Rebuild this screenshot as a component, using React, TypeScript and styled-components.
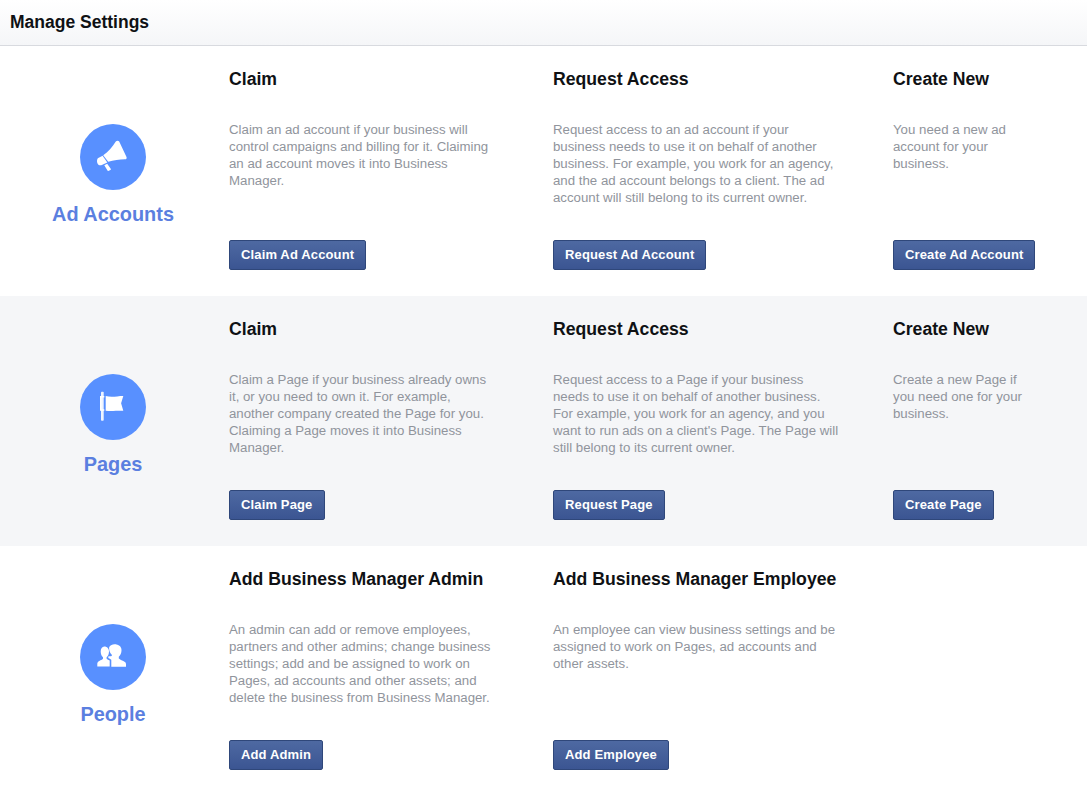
import React from "react";
import styled, { createGlobalStyle } from "styled-components";

const Global = createGlobalStyle`
  html, body { margin: 0; padding: 0; background: #fff; overflow: hidden; }
  body { font-family: "Liberation Sans", Arial, sans-serif; -webkit-font-smoothing: antialiased; }
`;
const Page = styled.div`width: 1087px; height: 785px; overflow: hidden;`;
const Header = styled.header`
  height: 45px; box-sizing: content-box; border-bottom: 1px solid #d8dadf;
  background: linear-gradient(#ffffff, #f5f6f8);
  display: flex; align-items: center; padding-left: 10px;
`;
const HeaderTitle = styled.h1`margin: 0; font-size: 17.5px; font-weight: 700; color: #0f1114;`;
const Section = styled.section<{ $shaded?: boolean }>`
  height: 250px; display: grid; grid-template-columns: 229px 324px 340px 194px;
  background: ${p => (p.$shaded ? "#f5f6f8" : "#fff")};
`;
const Side = styled.div`
  width: 226px; display: flex; flex-direction: column; align-items: center; padding-top: 78px; box-sizing: border-box;
`;
const Circle = styled.div`
  width: 66px; height: 66px; border-radius: 50%; background: #5890ff;
  display: flex; align-items: center; justify-content: center;
`;
const SideLabel = styled.div`margin-top: 12px; font-size: 19.9px; line-height: 24px; font-weight: 700; color: #5b7fe0;`;
const Col = styled.div`
  display: flex; flex-direction: column; align-items: flex-start; padding: 23px 0 26px; box-sizing: border-box;
`;
const Title = styled.h2`margin: 0; font-size: 17.65px; line-height: 20px; font-weight: 700; color: #0f1114;`;
const Desc = styled.p<{ $w: number }>`
  margin: 32px 0 0; width: ${p => p.$w}px; font-size: 13.25px; line-height: 17px; color: #90949c;
`;
const Button = styled.button`
  margin-top: auto; height: 30px; padding: 0 11px 2px; border: 1px solid #2f477a; border-radius: 2px;
  background: linear-gradient(#4e69a2, #3b5592); color: #fff; font: 700 13px "Liberation Sans", Arial, sans-serif;
  letter-spacing: 0.14px; white-space: nowrap;
`;

const Megaphone = () => (
  <svg width="66" height="66" viewBox="0 0 66 66" fill="#fff">
    <path d="M35.800 17.400c.9-1 2.700-1.100 3.400.1l7.300 15.400c.5 1.200-.2 2.400-1.500 2.400-5.800.2-11.300 1-16.800 2.500L23.200 31.200c5-3.300 9.100-8.300 12.600-13.800z" />
    <path d="M17.800 34.300l4.800-2.500 4.700 6.800-5.500 2.500c-1.800.7-3.500 0-4.300-1.600-.9-1.900-.5-3.900.3-5.200z" />
    <path d="M24.300 41.200l2.900-1.400 3.500 4.900c.3.600.1 1.100-.4 1.400l-1.400.7c-.6.300-1.100.1-1.400-.4z" />
  </svg>
);
const Flag = () => (
  <svg width="66" height="66" viewBox="0 0 66 66" fill="#fff">
    <rect x="21" y="17.700" width="2.700" height="29" rx=".8" fillOpacity=".9" />
    <path d="M20 22h4.300v1.500H21.500v11.700h2.800v1.500H20z" />
    <path d="M25.700 22c3.800 1 7.800.7 11.500.4 2-.2 4.200-.4 6.100-.4l-2.200 7.300 2.200 7.400c-2.500 0-5-.1-7.500.1-3.500.3-7 .4-10.100-.1z" />
  </svg>
);
const People = () => (
  <svg width="66" height="66" viewBox="0 0 66 66" fill="#fff">
    <path d="M24.300 22.500c2.900 0 4.700 2.200 4.700 5 0 2.500-1 4.700-2.400 5.800v1.500c.8.700 1.900 1.200 3.100 1.700v6H17.300v-2.700c0-1.300.6-2.200 2-2.900 1.500-.7 2.700-1.100 3.700-2.100v-1.500c-1.400-1.100-2.300-3.300-2.300-5.800 0-2.800 1.400-5 3.600-5z" />
    <path d="M36.500 20.700c3 0 5 2.400 5 5.500 0 2.800-1.100 5.300-2.700 6.500v1.900c1.500 1.200 2.800 1.700 4.500 2.400 1.800.8 2.700 1.800 2.700 3.200v2.500H31.300v-6.900c-1-.6-2-1.100-3-1.700v-1.500c1-.2 1.300-.3 3.500-.5v-1.400c-1.600-1.200-2.700-3.700-2.700-6.500 0-1.800 1.500-4 7.400-4z" />
  </svg>
);

const sections = [
  {
    label: "Ad Accounts", icon: <Megaphone />, shaded: false,
    cols: [
      { t: "Claim", w: 265, d: "Claim an ad account if your business will control campaigns and billing for it. Claiming an ad account moves it into Business Manager.", b: "Claim Ad Account" },
      { t: "Request Access", w: 287, d: "Request access to an ad account if your business needs to use it on behalf of another business. For example, you work for an agency, and the ad account belongs to a client. The ad account will still belong to its current owner.", b: "Request Ad Account" },
      { t: "Create New", w: 132, d: "You need a new ad account for your business.", b: "Create Ad Account" },
    ],
  },
  {
    label: "Pages", icon: <Flag />, shaded: true,
    cols: [
      { t: "Claim", w: 265, d: "Claim a Page if your business already owns it, or you need to own it. For example, another company created the Page for you. Claiming a Page moves it into Business Manager.", b: "Claim Page" },
      { t: "Request Access", w: 287, d: "Request access to a Page if your business needs to use it on behalf of another business. For example, you work for an agency, and you want to run ads on a client's Page. The Page will still belong to its current owner.", b: "Request Page" },
      { t: "Create New", w: 132, d: "Create a new Page if you need one for your business.", b: "Create Page" },
    ],
  },
  {
    label: "People", icon: <People />, shaded: false,
    cols: [
      { t: "Add Business Manager Admin", w: 265, d: "An admin can add or remove employees, partners and other admins; change business settings; add and be assigned to work on Pages, ad accounts and other assets; and delete the business from Business Manager.", b: "Add Admin" },
      { t: "Add Business Manager Employee", w: 287, d: "An employee can view business settings and be assigned to work on Pages, ad accounts and other assets.", b: "Add Employee" },
    ],
  },
];

export default function App() {
  return (
    <Page>
      <Global />
      <Header><HeaderTitle>Manage Settings</HeaderTitle></Header>
      {sections.map(s => (
        <Section key={s.label} $shaded={s.shaded}>
          <Side>
            <Circle>{s.icon}</Circle>
            <SideLabel>{s.label}</SideLabel>
          </Side>
          {s.cols.map(c => (
            <Col key={c.t}>
              <Title>{c.t}</Title>
              <Desc $w={c.w}>{c.d}</Desc>
              <Button>{c.b}</Button>
            </Col>
          ))}
        </Section>
      ))}
    </Page>
  );
}
